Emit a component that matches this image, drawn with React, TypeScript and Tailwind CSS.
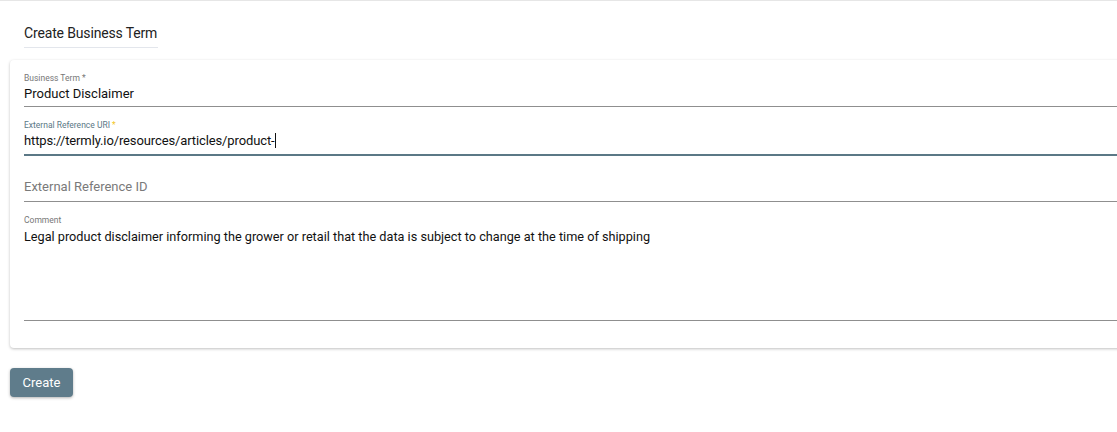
import React from 'react';

const App: React.FC = () => {
  return (
    <div
      className="min-h-screen w-full overflow-hidden bg-white border-t border-[#e6e6e6] text-[#1a1a1a]"
      style={{ fontFamily: 'Roboto, "Liberation Sans", sans-serif' }}
    >
      <div className="pt-[22px] pl-[24px]">
        <div className="w-[134px] h-[25px] whitespace-nowrap leading-[20px] text-[14px] tracking-[-0.15px] border-b border-[#e3e6ec] text-[#222]">
          Create Business Term
        </div>
      </div>

      <div className="ml-[10px] -mr-6 mt-[12px] h-[288px] rounded-[4px] bg-white shadow-[0_1px_3px_rgba(0,0,0,0.25)] pl-[14px] pt-[12px]">
        {/* Business Term */}
        <div className="h-[35px] border-b border-[#8f8f8f]">
          <div className="h-[12px] leading-[12px] text-[8.5px] text-[#777]">Business Term *</div>
          <div className="h-[20px] leading-[20px] text-[13px] text-[#111]">Product Disclaimer</div>
        </div>

        {/* External Reference URI (focused) */}
        <div className="mt-[12px] h-[37px] border-b-2 border-[#5b7886]">
          <div className="h-[12px] leading-[12px] text-[8.5px] text-[#5b7886]">
            External Reference URI <span className="text-[#f3c623]">*</span>
          </div>
          <div className="h-[20px] leading-[20px] text-[13px] tracking-[-0.12px] text-[#111]">
            https://termly.io/resources/articles/product-<span className="inline-block w-px h-[15px] align-[-3px] bg-[#111]" />
          </div>
        </div>

        {/* External Reference ID */}
        <div className="h-[46px] border-b border-[#8f8f8f] flex items-end pb-[4px]">
          <div className="h-[20px] leading-[20px] text-[13px] text-[#7a7a7a]">External Reference ID</div>
        </div>

        {/* Comment */}
        <div className="mt-[12px] h-[107px] border-b border-[#8f8f8f]">
          <div className="h-[12px] leading-[12px] text-[8.5px] text-[#777]">Comment</div>
          <div className="mt-[1px] h-[20px] leading-[20px] text-[12.7px] text-[#111]">
            Legal product disclaimer informing the grower or retail that the data is subject to change at the time of shipping
          </div>
        </div>
      </div>

      <div className="pl-[10px] mt-[20px]">
        <button className="w-[63px] h-[29px] rounded-[4px] bg-[#5f7c8b] text-white text-[13px] shadow-[0_1px_3px_rgba(0,0,0,0.3)]">
          Create
        </button>
      </div>
    </div>
  );
};

export default App;
